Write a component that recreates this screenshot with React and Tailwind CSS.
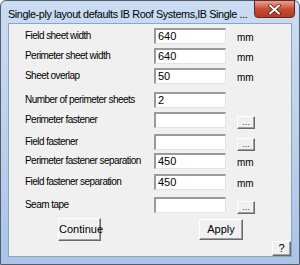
const rows = [
  { label: 'Field sheet width', value: '640', unit: 'mm', mt: 'mt-[4px]' },
  { label: 'Perimeter sheet width', value: '640', unit: 'mm', mt: 'mt-[4px]' },
  { label: 'Sheet overlap', value: '50', unit: 'mm', mt: 'mt-[4px]' },
  { label: 'Number of perimeter sheets', value: '2', mt: 'mt-[8px]' },
  { label: 'Perimeter fastener', value: '', browse: true, mt: 'mt-[4px]' },
  { label: 'Field fastener', value: '', browse: true, mt: 'mt-[6px]' },
  { label: 'Perimeter fastener separation', value: '450', unit: 'mm', mt: 'mt-[3px]' },
  { label: 'Field fastener separation', value: '450', unit: 'mm', mt: 'mt-[5px]' },
  { label: 'Seam tape', value: '', browse: true, mt: 'mt-[7px]' },
];

const raised =
  'bg-[#f0f0f0] border border-t-white border-l-white border-r-[#696969] border-b-[#696969] shadow-[inset_-1px_-1px_0_#a0a0a0]';

const Row = ({ label, value, unit, browse, mt }) => (
  <div className={`flex items-center h-[16px] ${mt}`}>
    <div className="w-[145px] pl-[16px] text-[10px] tracking-[-0.55px] leading-none text-black whitespace-nowrap">
      {label}
    </div>
    <div className="w-[72px] h-[16px] bg-white border-t-2 border-l-2 border-t-[#9a9a9a] border-l-[#9a9a9a] border-r border-b border-r-[#e3e3e3] border-b-[#e3e3e3] pl-[2px] text-[11px] leading-[13px] text-black">
      {value}
    </div>
    {unit && <div className="ml-[11px] text-[10px] text-black pt-[3px]">{unit}</div>}
    {browse && (
      <div className={`ml-[11px] mt-[5px] w-[18px] h-[13px] flex items-end justify-center text-[9px] leading-[9px] text-[#333] pb-[1px] ${raised}`}>
        ...
      </div>
    )}
  </div>
);

export default function App() {
  return (
    <div className="w-[300px] h-[265px] bg-white font-['Liberation_Sans',Arial,sans-serif] overflow-hidden">
      <div className="w-[300px] h-[265px] border border-[#555d68] rounded-t-[6px] bg-gradient-to-b from-[#c9dcf2] via-[#bcd2ec] to-[#a9c4e6] flex flex-col px-[7px] pb-[7px]">
        <div className="h-[27px] flex items-start relative">
          <div className="pt-[6px] text-[10.8px] tracking-[-0.4px] text-black leading-[14px] whitespace-nowrap">
            Single-ply layout defaults IB Roof Systems,IB Single ...
          </div>
          <div className="absolute right-[-3px] top-[-1px] w-[41px] h-[18px] rounded-b-[4px] border border-[#5c2a24] bg-gradient-to-b from-[#e8a293] via-[#c94a35] to-[#b53a26] flex items-center justify-center">
            <svg width="13" height="11" viewBox="0 0 13 11">
              <path d="M2 1.5 L11 9.5 M11 1.5 L2 9.5" stroke="#4a1a12" strokeWidth="3.4" strokeLinecap="round" />
              <path d="M2 1.5 L11 9.5 M11 1.5 L2 9.5" stroke="#ffffff" strokeWidth="2" strokeLinecap="round" />
            </svg>
          </div>
        </div>
        <div className="flex-1 bg-[#f0f0f0] border border-[#8ea5c0] flex flex-col">
          {rows.map((r) => (
            <Row key={r.label} {...r} />
          ))}
          <div className="flex items-start mt-[5px]">
            <button className={`ml-[49px] w-[43px] h-[23px] text-[11px] text-black ${raised}`}>Continue</button>
            <button className={`ml-[98px] mt-[1px] w-[44px] h-[21px] text-[11px] text-black ${raised}`}>Apply</button>
          </div>
          <div className="mt-auto flex justify-end">
            <div className={`w-[19px] h-[15px] flex items-center justify-center text-[11px] text-black ${raised}`}>?</div>
          </div>
        </div>
      </div>
    </div>
  );
}
